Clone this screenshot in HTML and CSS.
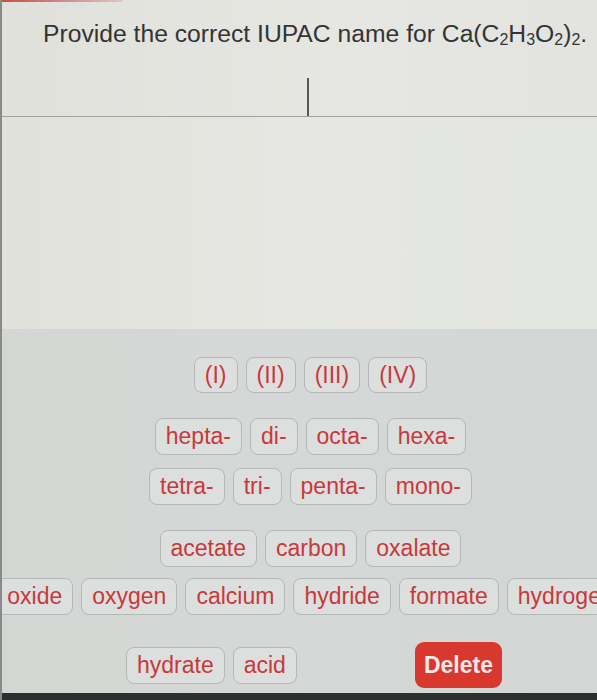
FILE: index.html
```html
<!DOCTYPE html>
<html>
<head>
<meta charset="utf-8">
<link rel="stylesheet" href="styles.css">
</head>
<body>
<div class="page">
  <div class="top-strip"></div>
  <div class="question">
    <h1 class="title">Provide the correct IUPAC name for Ca(C<sub>2</sub>H<sub>3</sub>O<sub>2</sub>)<sub>2</sub>.</h1>
    <div class="answer"><span class="cursor"></span></div>
  </div>
  <div class="blank"></div>
  <div class="panel">
    <div class="row row-roman">
      <span class="chip">(I)</span><span class="chip">(II)</span><span class="chip">(III)</span><span class="chip">(IV)</span>
    </div>
    <div class="row row-prefix1">
      <span class="chip">hepta-</span><span class="chip">di-</span><span class="chip">octa-</span><span class="chip">hexa-</span>
    </div>
    <div class="row row-prefix2">
      <span class="chip">tetra-</span><span class="chip">tri-</span><span class="chip">penta-</span><span class="chip">mono-</span>
    </div>
    <div class="row row-ion1">
      <span class="chip">acetate</span><span class="chip">carbon</span><span class="chip">oxalate</span>
    </div>
    <div class="row row-ion2">
      <span class="chip">oxide</span><span class="chip">oxygen</span><span class="chip">calcium</span><span class="chip">hydride</span><span class="chip">formate</span><span class="chip">hydrogen</span>
    </div>
    <div class="row row-last">
      <span class="chip">hydrate</span><span class="chip">acid</span><span class="delete">Delete</span>
    </div>
  </div>
  <div class="bezel"></div>
</div>
</body>
</html>
```
FILE: styles.css
```css
html, body {
  margin: 0;
  padding: 0;
}
body {
  background: #d2d5d3;
  font-family: "Liberation Sans", Arial, Helvetica, sans-serif;
}
.page {
  width: 597px;
  height: 700px;
  overflow: hidden;
  display: flex;
  flex-direction: column;
  border-left: 2px solid #8a8a88;
  box-sizing: border-box;
  position: relative;
}
.top-strip {
  position: absolute;
  left: 0;
  top: 0;
  width: 120px;
  height: 2px;
  background: linear-gradient(90deg, #c4504c, rgba(196, 80, 76, 0.2));
}
.question {
  height: 117px;
  background: linear-gradient(90deg, #e1e1dc, #e6e6e2 60%, #e3e4e0);
  border-bottom: 1px solid #a2a3a1;
  box-sizing: border-box;
  display: flex;
  flex-direction: column;
}
.title {
  margin: 0;
  padding: 19px 0 0 41px;
  font-size: 24.7px;
  font-weight: normal;
  color: #333434;
  line-height: 30px;
  white-space: nowrap;
}
.title sub {
  font-size: 16px;
  vertical-align: -3px;
  line-height: 0;
}
.answer {
  flex: 1;
  display: flex;
  justify-content: flex-start;
  align-items: flex-end;
  padding-left: 305px;
}
.cursor {
  width: 2px;
  height: 38px;
  background: #55595b;
}
.blank {
  height: 212px;
  background: linear-gradient(90deg, #e1e1db, #e6e7e2 50%, #e3e5e1);
}
.panel {
  flex: 1;
  background: linear-gradient(90deg, #d4d6d3, #d4d8d7 50%, #d2d6d5);
  padding: 28px 0 0 22px;
  display: flex;
  flex-direction: column;
}
.row {
  display: flex;
  justify-content: center;
  gap: 8px;
  white-space: nowrap;
}
.row-prefix1 { margin-top: 25px; }
.row-prefix2 { margin-top: 13px; }
.row-ion1 { margin-top: 25px; }
.row-ion2 { margin-top: 11px; }
.row-last {
  margin-top: 27px;
  justify-content: flex-start;
  padding-left: 102px;
  align-items: center;
}
.chip {
  flex: none;
  height: 37px;
  box-sizing: border-box;
  padding: 0 10px;
  border: 1px solid #b5b8b6;
  border-radius: 8px;
  background: #dcdfdd;
  color: #c8393c;
  font-size: 23px;
  line-height: 35px;
}
.row-roman .chip {
  padding: 0 10px;
  height: 36px;
  line-height: 34px;
}
.delete {
  margin-left: 110px;
  height: 46px;
  box-sizing: border-box;
  padding: 0 9px;
  border-radius: 9px;
  background: #d8382e;
  color: #f6e9e7;
  font-weight: bold;
  font-size: 23px;
  line-height: 46px;
}
.bezel {
  height: 7px;
  background: #2e2f31;
}
```
